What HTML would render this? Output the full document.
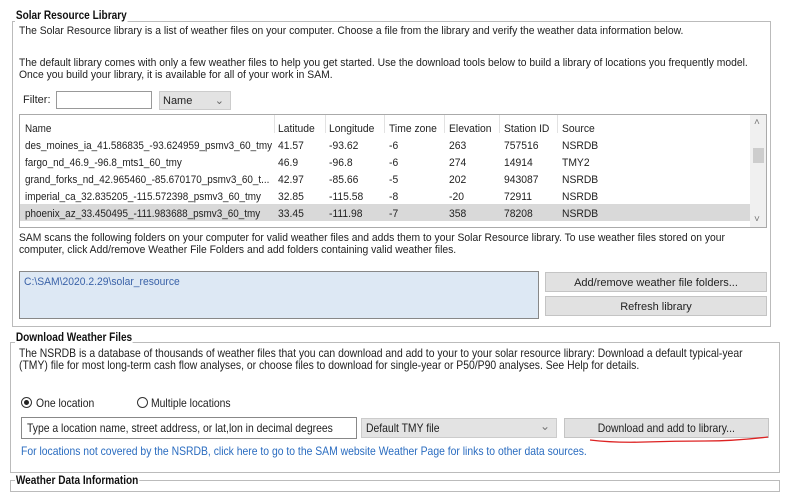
<!DOCTYPE html>
<html><head><style>
body{margin:0;width:800px;height:481px;overflow:hidden;background:#fff;font-family:"Liberation Sans",sans-serif;font-size:11px;color:#222;position:relative}
.a{position:absolute;white-space:nowrap}
.s{transform-origin:0 0;transform:scaleX(0.94)}
.sl{transform-origin:0 0;transform:scaleX(0.9)}
.gb{position:absolute;border:1px solid #bbb}
.t{position:absolute;background:#fff;font-weight:bold;font-size:12px;padding:0 1px;color:#111;transform-origin:0 0;transform:scaleX(0.84)}
.btn{position:absolute;background:#e1e1e1;border:1px solid #c4c4c4;text-align:center;box-sizing:border-box}
.n{font-size:12px}
.ns{display:inline-block;transform-origin:0 0;transform:scaleX(0.865)}
</style></head><body>
<div class="gb" style="left:12px;top:21px;width:757px;height:304px"></div>
<div class="t" style="left:15px;top:8px">Solar Resource Library</div>
<div class="a s" style="left:19px;top:25px">The Solar Resource library is a list of weather files on your computer. Choose a file from the library and verify the weather data information below.</div>
<div class="a s" style="left:19px;top:57px">The default library comes with only a few weather files to help you get started. Use the download tools below to build a library of locations you frequently model.</div>
<div class="a s" style="left:19px;top:69px">Once you build your library, it is available for all of your work in SAM.</div>
<div class="a" style="left:23px;top:94px">Filter:</div>
<div class="a" style="left:56px;top:91px;width:96px;height:18px;border:1px solid #999;box-sizing:border-box"></div>
<div class="a" style="left:159px;top:91px;width:72px;height:19px;background:#e3e3e3;border:1px solid #ccc;box-sizing:border-box;padding:3px 0 0 3px">Name<span style="position:absolute;right:6px;top:2px;color:#666">&#8964;</span></div>
<div class="a" style="left:19px;top:114px;width:748px;height:114px;border:1px solid #aaa;box-sizing:border-box;overflow:hidden">
<div class="a" style="left:0;top:89px;width:730px;height:17px;background:#d9d9d9"></div>
<div class="a" style="left:254px;top:0;width:1px;height:18px;background:#e2e2e2"></div>
<div class="a" style="left:305px;top:0;width:1px;height:18px;background:#e2e2e2"></div>
<div class="a" style="left:364px;top:0;width:1px;height:18px;background:#e2e2e2"></div>
<div class="a" style="left:424px;top:0;width:1px;height:18px;background:#e2e2e2"></div>
<div class="a" style="left:479px;top:0;width:1px;height:18px;background:#e2e2e2"></div>
<div class="a" style="left:537px;top:0;width:1px;height:18px;background:#e2e2e2"></div>
<div class="a" style="left:730px;top:0;width:17px;height:113px;background:#f0f0f0"></div>
<div class="a" style="left:733px;top:33px;width:11px;height:15px;background:#cdcdcd"></div>
<div class="a" style="left:734px;top:2px;color:#777;font-size:10px">&#708;</div>
<div class="a" style="left:734px;top:99px;color:#777;font-size:10px">&#709;</div>
</div>
<div style="position:absolute;left:25px;top:121px;line-height:17px">
<div class="a sl" style="left:0">Name<br>des_moines_ia_41.586835_-93.624959_psmv3_60_tmy<br>fargo_nd_46.9_-96.8_mts1_60_tmy<br>grand_forks_nd_42.965460_-85.670170_psmv3_60_t...<br>imperial_ca_32.835205_-115.572398_psmv3_60_tmy<br>phoenix_az_33.450495_-111.983688_psmv3_60_tmy</div>
<div class="a s" style="left:253px">Latitude<br>41.57<br>46.9<br>42.97<br>32.85<br>33.45</div>
<div class="a s" style="left:304px">Longitude<br>-93.62<br>-96.8<br>-85.66<br>-115.58<br>-111.98</div>
<div class="a s" style="left:364px">Time zone<br>-6<br>-6<br>-5<br>-8<br>-7</div>
<div class="a s" style="left:424px">Elevation<br>263<br>274<br>202<br>-20<br>358</div>
<div class="a s" style="left:479px">Station ID<br>757516<br>14914<br>943087<br>72911<br>78208</div>
<div class="a s" style="left:537px">Source<br>NSRDB<br>TMY2<br>NSRDB<br>NSRDB<br>NSRDB</div>
</div>
<div class="a s" style="left:19px;top:232px">SAM scans the following folders on your computer for valid weather files and adds them to your Solar Resource library. To use weather files stored on your</div>
<div class="a s" style="left:19px;top:244px">computer, click Add/remove Weather File Folders and add folders containing valid weather files.</div>
<div class="a" style="left:19px;top:271px;width:520px;height:48px;background:#dde8f4;border:1px solid #888;box-sizing:border-box"><span class="a s" style="left:4px;top:4px;color:#3a62a8">C:\SAM\2020.2.29\solar_resource</span></div>
<div class="btn" style="left:545px;top:272px;width:222px;height:20px;padding-top:4px">Add/remove weather file folders...</div>
<div class="btn" style="left:545px;top:296px;width:222px;height:20px;padding-top:4px">Refresh library</div>

<div class="gb" style="left:10px;top:342px;width:768px;height:129px"></div>
<div class="t" style="left:15px;top:330px">Download Weather Files</div>
<div class="a n" style="left:19px;top:346px"><span class="ns">The NSRDB is a database of thousands of weather files that you can download and add to your to your solar resource library: Download a default typical-year</span></div>
<div class="a n" style="left:19px;top:358px"><span class="ns">(TMY) file for most long-term cash flow analyses, or choose files to download for single-year or P50/P90 analyses. See Help for details.</span></div>
<div class="a" style="left:21px;top:397px;width:11px;height:11px;border:1px solid #333;border-radius:50%;box-sizing:border-box"><div class="a" style="left:2px;top:2px;width:5px;height:5px;border-radius:50%;background:#222"></div></div>
<div class="a n" style="left:36px;top:396px"><span class="ns">One location</span></div>
<div class="a" style="left:137px;top:397px;width:11px;height:11px;border:1px solid #333;border-radius:50%;box-sizing:border-box"></div>
<div class="a n" style="left:151px;top:396px"><span class="ns">Multiple locations</span></div>
<div class="a n" style="left:21px;top:417px;width:336px;height:22px;border:1px solid #888;box-sizing:border-box;padding:3px 0 0 5px"><span class="ns">Type a location name, street address, or lat,lon in decimal degrees</span></div>
<div class="a n" style="left:361px;top:418px;width:196px;height:20px;background:#e3e3e3;border:1px solid #ccc;box-sizing:border-box;padding:2px 0 0 4px"><span class="ns">Default TMY file</span><span style="position:absolute;right:6px;top:0;color:#777">&#8964;</span></div>
<div class="btn n" style="left:564px;top:418px;width:205px;height:20px;padding-top:2px"><span class="ns" style="transform-origin:50% 0">Download and add to library...</span></div>
<svg class="a" style="left:585px;top:434px" width="190" height="12"><path d="M5 6 Q30 9 60 8 T120 7 T183 3" stroke="#d22" stroke-width="1.3" fill="none"/></svg>
<div class="a n" style="left:21px;top:444px;color:#2a6cc0;text-decoration:underline"><span class="ns">For locations not covered by the NSRDB, click here to go to the SAM website Weather Page for links to other data sources.</span></div>
<div class="gb" style="left:10px;top:480px;width:768px;height:10px"></div>
<div class="t" style="left:15px;top:473px">Weather Data Information</div>
</body></html>
